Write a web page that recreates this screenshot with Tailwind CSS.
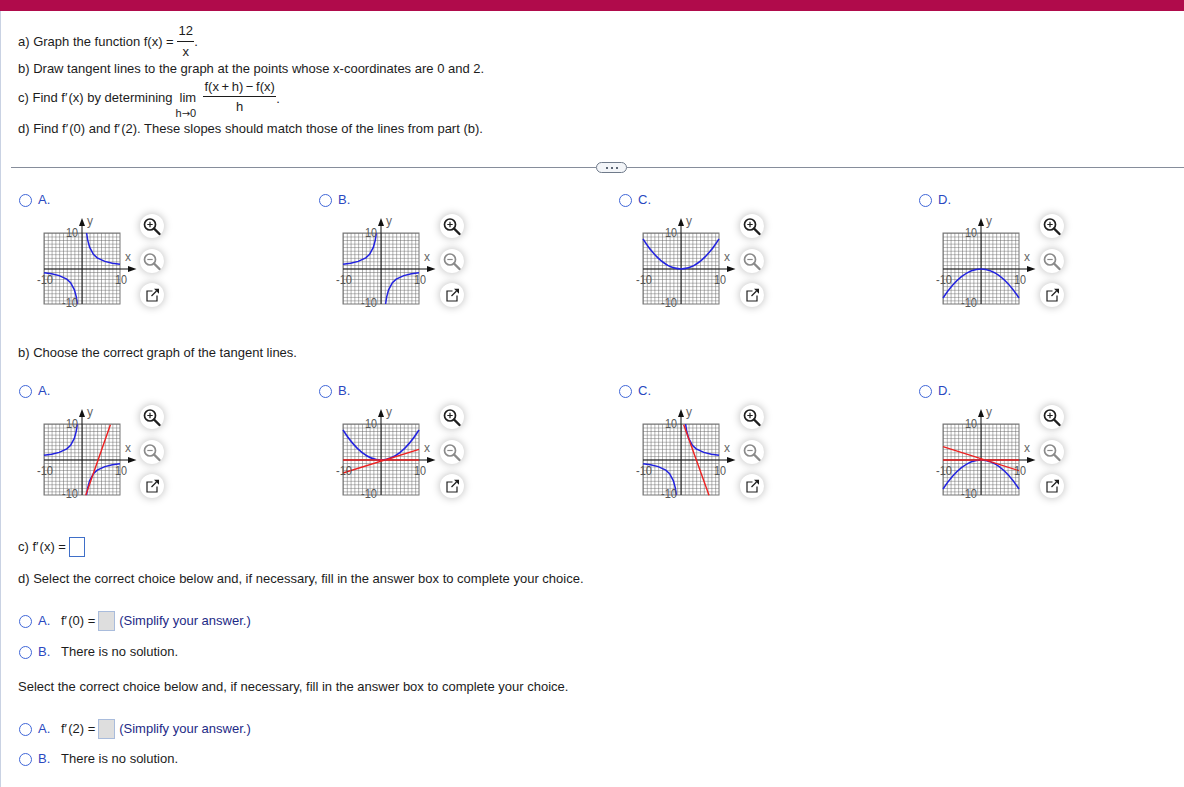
<!DOCTYPE html>
<html lang="en">
<head>
    <meta charset="UTF-8">
    <title>Tangent lines</title>
    <script src="https://cdn.jsdelivr.net/npm/@tailwindcss/browser@4"></script>
</head>
<body class="bg-white text-[#1c1c1c] text-[13px] leading-[18px] font-['Liberation_Sans',Arial,sans-serif] overflow-hidden">
    <!-- shared graph parts -->
    <svg class="absolute w-0 h-0">
        <defs>
            <pattern id="cells" x="12" y="18" width="3.8" height="3.55" patternUnits="userSpaceOnUse">
                <path d="M0 0H3.8M0 0V3.55" fill="none" stroke="#666" stroke-width="1"/>
            </pattern>
            <symbol id="axes" viewBox="0 0 106 96">
                <rect x="12" y="18" width="76" height="71" fill="url(#cells)" stroke="#777" stroke-width="1"/>
                <path d="M50 6V89M12 54H100" stroke="#111" stroke-width="1"/>
                <path d="M50 3L47 11H53ZM104.500 54L96 51V57Z" fill="#111"/>
            </symbol>
            <symbol id="hyp" viewBox="0 0 106 96">
                <path d="M54.600 18L55.700 25.100L57.600 32.200L61.400 39.300L65.200 42.900L72.800 46.400L80.400 48.200L88 49.200" fill="none" stroke="#2222e0" stroke-width="1.500"/>
                <path d="M45.400 89L44.300 81.900L42.400 74.800L38.600 67.700L34.800 64.100L27.200 60.600L19.600 58.800L12 57.800" fill="none" stroke="#2222e0" stroke-width="1.500"/>
            </symbol>
            <symbol id="hypflip" viewBox="0 0 106 96">
                <path d="M45.400 18L44.300 25.100L42.400 32.200L38.600 39.300L34.800 42.900L27.200 46.400L19.600 48.200L12 49.200" fill="none" stroke="#2222e0" stroke-width="1.500"/>
                <path d="M54.600 89L55.700 81.900L57.600 74.800L61.400 67.700L65.200 64.100L72.800 60.600L80.400 58.800L88 57.800" fill="none" stroke="#2222e0" stroke-width="1.500"/>
            </symbol>
            <symbol id="zoomin" viewBox="0 0 24 24">
                <circle cx="10" cy="10.500" r="5.500" fill="none" stroke="#1f1f1f" stroke-width="1.700"/>
                <path d="M14 14.500L19.500 20" stroke="#1f1f1f" stroke-width="2.400" stroke-linecap="round"/>
                <path d="M7.300 10.500H12.700M10 7.800V13.200" stroke="#1f1f1f" stroke-width="1.200"/>
            </symbol>
            <symbol id="zoomout" viewBox="0 0 24 24">
                <circle cx="10" cy="10.500" r="5.500" fill="none" stroke="#8a8a8a" stroke-width="1.700"/>
                <path d="M14 14.500L19.500 20" stroke="#8a8a8a" stroke-width="2.400" stroke-linecap="round"/>
                <path d="M7.300 10.500H12.700" stroke="#8a8a8a" stroke-width="1.200"/>
            </symbol>
            <symbol id="popout" viewBox="0 0 24 24">
                <path d="M12.500 8H7V18H17V12.500" fill="none" stroke="#1f1f1f" stroke-width="1.200"/>
                <path d="M11.500 13L16.500 8" stroke="#1f1f1f" stroke-width="1.300"/>
                <path d="M14 5.700H19V10.700Z" fill="#1f1f1f"/>
            </symbol>
        </defs>
    </svg>

    <div class="h-[11px] bg-[#b00b4b]"></div>

    <div class="border-l border-[#c9d2e3] pl-[17px] h-[776px]">
        <!-- question -->
        <div class="pt-[11px]">
            <div class="flex items-center h-[37px]">
                <span class="mt-[3px]">a) Graph the function f(x) =&nbsp;</span>
                <span class="inline-flex flex-col items-center w-[17px] mt-[1px]">
                    <span class="leading-[17px] pb-[2px]">12</span>
                    <span class="leading-[19px] border-t border-[#1c1c1c] w-full text-center">x</span>
                </span>
                <span class="mt-[3px]">.</span>
            </div>
            <div class="h-[18px] mt-[1px]">b) Draw tangent lines to the graph at the points whose x-coordinates are 0 and 2.</div>
            <div class="flex items-center h-[36px] mt-[1px]">
                <span class="mt-[1px]">c) Find f′&hairsp;(x) by determining</span>
                <span class="relative ml-[7px] mt-[1px]">lim
                    <span class="absolute left-[-4px] top-[15px] text-[11px] whitespace-nowrap">h<span class="font-['DejaVu_Sans',sans-serif] text-[10px]">→</span>0</span>
                </span>
                <span class="inline-flex flex-col items-center w-[73px] ml-[7px]">
                    <span class="leading-[17px] pb-[1px] whitespace-nowrap">f(x&thinsp;+&thinsp;h)&thinsp;−&thinsp;f(x)</span>
                    <span class="leading-[19px] border-t border-[#1c1c1c] w-full text-center">h</span>
                </span>
                <span class="mt-[3px]">.</span>
            </div>
            <div class="h-[18px] mt-[5px]">d) Find f′&hairsp;(0) and f′&hairsp;(2). These slopes should match those of the lines from part (b).</div>
        </div>

        <!-- divider -->
        <div class="flex items-center h-[11px] mt-[24px] ml-[-7px]">
            <div class="w-[585px] border-t border-[#868d9b]"></div>
            <div class="flex items-center justify-center gap-[3px] w-[31px] h-[11px] rounded-full border border-[#6f7a8a] bg-[#f3f5f8]">
                <span class="w-[2px] h-[2px] bg-[#5c6675]"></span>
                <span class="w-[2px] h-[2px] bg-[#5c6675]"></span>
                <span class="w-[2px] h-[2px] bg-[#5c6675]"></span>
            </div>
            <div class="flex-1 border-t border-[#868d9b]"></div>
        </div>

        <!-- a) graphs -->
        <div class="grid grid-cols-[repeat(4,300px)] mt-[17px]">
            <div>
                <div class="flex items-center h-5"><span class="w-[13px] h-[13px] ml-[1px] rounded-full border border-[#3f66d8]"></span><span class="ml-[6px] text-[#2a48c0]">A.</span></div>
                <div class="flex mt-[5px] ml-[14px]">
                    <svg width="106" height="96" class="overflow-visible"><use href="#axes"/><use href="#hyp"/>
                        <g font-size="12" fill="#555"><text x="34" y="22" textLength="12" lengthAdjust="spacingAndGlyphs">10</text><text x="5" y="69" textLength="16" lengthAdjust="spacingAndGlyphs">-10</text><text x="83" y="69" textLength="12" lengthAdjust="spacingAndGlyphs">10</text><text x="30" y="92" textLength="16" lengthAdjust="spacingAndGlyphs">-10</text><text x="93" y="46" fill="#666">x</text><text x="55" y="10" fill="#666">y</text></g>
                    </svg>
                    <div class="flex flex-col gap-[10.500px] mt-[-1px] ml-[2px]">
                        <div class="w-6 h-6 rounded-full bg-white shadow-[0_0_8px_rgba(0,0,0,0.28)]"><svg width="24" height="24"><use href="#zoomin"/></svg></div>
                        <div class="w-6 h-6 rounded-full bg-white shadow-[0_0_8px_rgba(0,0,0,0.28)]"><svg width="24" height="24"><use href="#zoomout"/></svg></div>
                        <div class="w-6 h-6 rounded-full bg-white shadow-[0_0_8px_rgba(0,0,0,0.28)]"><svg width="24" height="24"><use href="#popout"/></svg></div>
                    </div>
                </div>
            </div>
            <div>
                <div class="flex items-center h-5"><span class="w-[13px] h-[13px] ml-[1px] rounded-full border border-[#3f66d8]"></span><span class="ml-[6px] text-[#2a48c0]">B.</span></div>
                <div class="flex mt-[5px] ml-[13px]">
                    <svg width="106" height="96" class="overflow-visible"><use href="#axes"/><use href="#hypflip"/>
                        <g font-size="12" fill="#555"><text x="34" y="22" textLength="12" lengthAdjust="spacingAndGlyphs">10</text><text x="5" y="69" textLength="16" lengthAdjust="spacingAndGlyphs">-10</text><text x="83" y="69" textLength="12" lengthAdjust="spacingAndGlyphs">10</text><text x="30" y="92" textLength="16" lengthAdjust="spacingAndGlyphs">-10</text><text x="93" y="46" fill="#666">x</text><text x="55" y="10" fill="#666">y</text></g>
                    </svg>
                    <div class="flex flex-col gap-[10.500px] mt-[-1px] ml-[3px]">
                        <div class="w-6 h-6 rounded-full bg-white shadow-[0_0_8px_rgba(0,0,0,0.28)]"><svg width="24" height="24"><use href="#zoomin"/></svg></div>
                        <div class="w-6 h-6 rounded-full bg-white shadow-[0_0_8px_rgba(0,0,0,0.28)]"><svg width="24" height="24"><use href="#zoomout"/></svg></div>
                        <div class="w-6 h-6 rounded-full bg-white shadow-[0_0_8px_rgba(0,0,0,0.28)]"><svg width="24" height="24"><use href="#popout"/></svg></div>
                    </div>
                </div>
            </div>
            <div>
                <div class="flex items-center h-5"><span class="w-[13px] h-[13px] ml-[1px] rounded-full border border-[#3f66d8]"></span><span class="ml-[6px] text-[#2a48c0]">C.</span></div>
                <div class="flex mt-[5px] ml-[13px]">
                    <svg width="106" height="96" class="overflow-visible"><use href="#axes"/><path d="M12 24Q50 84 88 24" fill="none" stroke="#2222e0" stroke-width="1.500"/>
                        <g font-size="12" fill="#555"><text x="34" y="22" textLength="12" lengthAdjust="spacingAndGlyphs">10</text><text x="5" y="69" textLength="16" lengthAdjust="spacingAndGlyphs">-10</text><text x="83" y="69" textLength="12" lengthAdjust="spacingAndGlyphs">10</text><text x="30" y="92" textLength="16" lengthAdjust="spacingAndGlyphs">-10</text><text x="93" y="46" fill="#666">x</text><text x="55" y="10" fill="#666">y</text></g>
                    </svg>
                    <div class="flex flex-col gap-[10.500px] mt-[-1px] ml-[3px]">
                        <div class="w-6 h-6 rounded-full bg-white shadow-[0_0_8px_rgba(0,0,0,0.28)]"><svg width="24" height="24"><use href="#zoomin"/></svg></div>
                        <div class="w-6 h-6 rounded-full bg-white shadow-[0_0_8px_rgba(0,0,0,0.28)]"><svg width="24" height="24"><use href="#zoomout"/></svg></div>
                        <div class="w-6 h-6 rounded-full bg-white shadow-[0_0_8px_rgba(0,0,0,0.28)]"><svg width="24" height="24"><use href="#popout"/></svg></div>
                    </div>
                </div>
            </div>
            <div>
                <div class="flex items-center h-5"><span class="w-[13px] h-[13px] ml-[1px] rounded-full border border-[#3f66d8]"></span><span class="ml-[6px] text-[#2a48c0]">D.</span></div>
                <div class="flex mt-[5px] ml-[13px]">
                    <svg width="106" height="96" class="overflow-visible"><use href="#axes"/><path d="M12 83Q50 25 88 83" fill="none" stroke="#2222e0" stroke-width="1.500"/>
                        <g font-size="12" fill="#555"><text x="34" y="22" textLength="12" lengthAdjust="spacingAndGlyphs">10</text><text x="5" y="69" textLength="16" lengthAdjust="spacingAndGlyphs">-10</text><text x="83" y="69" textLength="12" lengthAdjust="spacingAndGlyphs">10</text><text x="30" y="92" textLength="16" lengthAdjust="spacingAndGlyphs">-10</text><text x="93" y="46" fill="#666">x</text><text x="55" y="10" fill="#666">y</text></g>
                    </svg>
                    <div class="flex flex-col gap-[10.500px] mt-[-1px] ml-[3px]">
                        <div class="w-6 h-6 rounded-full bg-white shadow-[0_0_8px_rgba(0,0,0,0.28)]"><svg width="24" height="24"><use href="#zoomin"/></svg></div>
                        <div class="w-6 h-6 rounded-full bg-white shadow-[0_0_8px_rgba(0,0,0,0.28)]"><svg width="24" height="24"><use href="#zoomout"/></svg></div>
                        <div class="w-6 h-6 rounded-full bg-white shadow-[0_0_8px_rgba(0,0,0,0.28)]"><svg width="24" height="24"><use href="#popout"/></svg></div>
                    </div>
                </div>
            </div>
        </div>

        <div class="mt-[33px] h-[18px]">b) Choose the correct graph of the tangent lines.</div>

        <!-- b) graphs -->
        <div class="grid grid-cols-[repeat(4,300px)] mt-[19px]">
            <div>
                <div class="flex items-center h-5"><span class="w-[13px] h-[13px] ml-[1px] rounded-full border border-[#3f66d8]"></span><span class="ml-[6px] text-[#2a48c0]">A.</span></div>
                <div class="flex mt-[5px] ml-[14px]">
                    <svg width="106" height="96" class="overflow-visible"><use href="#axes"/><use href="#hypflip"/><path d="M53.700 89.300L78.400 18.700" stroke="#ee2020" stroke-width="1.400"/>
                        <g font-size="12" fill="#555"><text x="34" y="22" textLength="12" lengthAdjust="spacingAndGlyphs">10</text><text x="5" y="69" textLength="16" lengthAdjust="spacingAndGlyphs">-10</text><text x="83" y="69" textLength="12" lengthAdjust="spacingAndGlyphs">10</text><text x="30" y="92" textLength="16" lengthAdjust="spacingAndGlyphs">-10</text><text x="93" y="46" fill="#666">x</text><text x="55" y="10" fill="#666">y</text></g>
                    </svg>
                    <div class="flex flex-col gap-[10.500px] mt-[-1px] ml-[2px]">
                        <div class="w-6 h-6 rounded-full bg-white shadow-[0_0_8px_rgba(0,0,0,0.28)]"><svg width="24" height="24"><use href="#zoomin"/></svg></div>
                        <div class="w-6 h-6 rounded-full bg-white shadow-[0_0_8px_rgba(0,0,0,0.28)]"><svg width="24" height="24"><use href="#zoomout"/></svg></div>
                        <div class="w-6 h-6 rounded-full bg-white shadow-[0_0_8px_rgba(0,0,0,0.28)]"><svg width="24" height="24"><use href="#popout"/></svg></div>
                    </div>
                </div>
            </div>
            <div>
                <div class="flex items-center h-5"><span class="w-[13px] h-[13px] ml-[1px] rounded-full border border-[#3f66d8]"></span><span class="ml-[6px] text-[#2a48c0]">B.</span></div>
                <div class="flex mt-[5px] ml-[13px]">
                    <svg width="106" height="96" class="overflow-visible"><use href="#axes"/><path d="M12 24Q50 84 88 24" fill="none" stroke="#2222e0" stroke-width="1.500"/><path d="M12 54H88M12 67L88 43.300" stroke="#ee2020" stroke-width="1.400"/>
                        <g font-size="12" fill="#555"><text x="34" y="22" textLength="12" lengthAdjust="spacingAndGlyphs">10</text><text x="5" y="69" textLength="16" lengthAdjust="spacingAndGlyphs">-10</text><text x="83" y="69" textLength="12" lengthAdjust="spacingAndGlyphs">10</text><text x="30" y="92" textLength="16" lengthAdjust="spacingAndGlyphs">-10</text><text x="93" y="46" fill="#666">x</text><text x="55" y="10" fill="#666">y</text></g>
                    </svg>
                    <div class="flex flex-col gap-[10.500px] mt-[-1px] ml-[3px]">
                        <div class="w-6 h-6 rounded-full bg-white shadow-[0_0_8px_rgba(0,0,0,0.28)]"><svg width="24" height="24"><use href="#zoomin"/></svg></div>
                        <div class="w-6 h-6 rounded-full bg-white shadow-[0_0_8px_rgba(0,0,0,0.28)]"><svg width="24" height="24"><use href="#zoomout"/></svg></div>
                        <div class="w-6 h-6 rounded-full bg-white shadow-[0_0_8px_rgba(0,0,0,0.28)]"><svg width="24" height="24"><use href="#popout"/></svg></div>
                    </div>
                </div>
            </div>
            <div>
                <div class="flex items-center h-5"><span class="w-[13px] h-[13px] ml-[1px] rounded-full border border-[#3f66d8]"></span><span class="ml-[6px] text-[#2a48c0]">C.</span></div>
                <div class="flex mt-[5px] ml-[13px]">
                    <svg width="106" height="96" class="overflow-visible"><use href="#axes"/><use href="#hyp"/><path d="M52.700 18.700L78 89.300" stroke="#ee2020" stroke-width="1.400"/>
                        <g font-size="12" fill="#555"><text x="34" y="22" textLength="12" lengthAdjust="spacingAndGlyphs">10</text><text x="5" y="69" textLength="16" lengthAdjust="spacingAndGlyphs">-10</text><text x="83" y="69" textLength="12" lengthAdjust="spacingAndGlyphs">10</text><text x="30" y="92" textLength="16" lengthAdjust="spacingAndGlyphs">-10</text><text x="93" y="46" fill="#666">x</text><text x="55" y="10" fill="#666">y</text></g>
                    </svg>
                    <div class="flex flex-col gap-[10.500px] mt-[-1px] ml-[3px]">
                        <div class="w-6 h-6 rounded-full bg-white shadow-[0_0_8px_rgba(0,0,0,0.28)]"><svg width="24" height="24"><use href="#zoomin"/></svg></div>
                        <div class="w-6 h-6 rounded-full bg-white shadow-[0_0_8px_rgba(0,0,0,0.28)]"><svg width="24" height="24"><use href="#zoomout"/></svg></div>
                        <div class="w-6 h-6 rounded-full bg-white shadow-[0_0_8px_rgba(0,0,0,0.28)]"><svg width="24" height="24"><use href="#popout"/></svg></div>
                    </div>
                </div>
            </div>
            <div>
                <div class="flex items-center h-5"><span class="w-[13px] h-[13px] ml-[1px] rounded-full border border-[#3f66d8]"></span><span class="ml-[6px] text-[#2a48c0]">D.</span></div>
                <div class="flex mt-[5px] ml-[13px]">
                    <svg width="106" height="96" class="overflow-visible"><use href="#axes"/><path d="M12 83Q50 25 88 83" fill="none" stroke="#2222e0" stroke-width="1.500"/><path d="M12 54H88M12 40.700L88 64.700" stroke="#ee2020" stroke-width="1.400"/>
                        <g font-size="12" fill="#555"><text x="34" y="22" textLength="12" lengthAdjust="spacingAndGlyphs">10</text><text x="5" y="69" textLength="16" lengthAdjust="spacingAndGlyphs">-10</text><text x="83" y="69" textLength="12" lengthAdjust="spacingAndGlyphs">10</text><text x="30" y="92" textLength="16" lengthAdjust="spacingAndGlyphs">-10</text><text x="93" y="46" fill="#666">x</text><text x="55" y="10" fill="#666">y</text></g>
                    </svg>
                    <div class="flex flex-col gap-[10.500px] mt-[-1px] ml-[3px]">
                        <div class="w-6 h-6 rounded-full bg-white shadow-[0_0_8px_rgba(0,0,0,0.28)]"><svg width="24" height="24"><use href="#zoomin"/></svg></div>
                        <div class="w-6 h-6 rounded-full bg-white shadow-[0_0_8px_rgba(0,0,0,0.28)]"><svg width="24" height="24"><use href="#zoomout"/></svg></div>
                        <div class="w-6 h-6 rounded-full bg-white shadow-[0_0_8px_rgba(0,0,0,0.28)]"><svg width="24" height="24"><use href="#popout"/></svg></div>
                    </div>
                </div>
            </div>
        </div>

        <!-- answers -->
        <div class="flex items-center h-5 mt-[35px]">
            <span>c) f′&hairsp;(x) =</span>
            <span class="w-[16px] h-[20px] ml-[3px] border border-[#3f6fc8] bg-white"></span>
        </div>
        <div class="h-[18px] mt-[13px]">d) Select the correct choice below and, if necessary, fill in the answer box to complete your choice.</div>

        <div class="flex items-center h-5 mt-[23px]">
            <span class="w-[13px] h-[13px] ml-[1px] rounded-full border border-[#3f66d8]"></span>
            <span class="ml-[6px] w-[23px] text-[#2a48c0]">A.</span>
            <span>f′&hairsp;(0) =</span>
            <span class="w-[17px] h-[20px] ml-[3px] border border-[#a9bcdc] bg-[#dedede]"></span>
            <span class="ml-[4px] text-[#1d2a86]">(Simplify your answer.)</span>
        </div>
        <div class="flex items-center h-5 mt-[11px]">
            <span class="w-[13px] h-[13px] ml-[1px] rounded-full border border-[#3f66d8]"></span>
            <span class="ml-[6px] w-[23px] text-[#2a48c0]">B.</span>
            <span>There is no solution.</span>
        </div>

        <div class="h-[18px] mt-[16px]">Select the correct choice below and, if necessary, fill in the answer box to complete your choice.</div>

        <div class="flex items-center h-5 mt-[23px]">
            <span class="w-[13px] h-[13px] ml-[1px] rounded-full border border-[#3f66d8]"></span>
            <span class="ml-[6px] w-[23px] text-[#2a48c0]">A.</span>
            <span>f′&hairsp;(2) =</span>
            <span class="w-[17px] h-[20px] ml-[3px] border border-[#a9bcdc] bg-[#dedede]"></span>
            <span class="ml-[4px] text-[#1d2a86]">(Simplify your answer.)</span>
        </div>
        <div class="flex items-center h-5 mt-[10px]">
            <span class="w-[13px] h-[13px] ml-[1px] rounded-full border border-[#3f66d8]"></span>
            <span class="ml-[6px] w-[23px] text-[#2a48c0]">B.</span>
            <span>There is no solution.</span>
        </div>
    </div>
</body>
</html>
